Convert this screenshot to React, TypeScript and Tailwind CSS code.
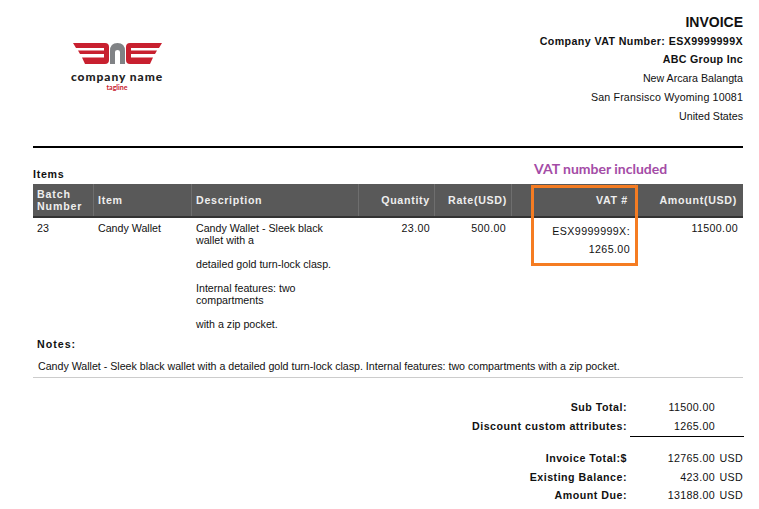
import React from 'react';

const font = "font-['Liberation_Sans',Arial,sans-serif]";

function Logo() {
  return (
    <div className="flex flex-col items-center w-[100px] pt-[43px] pl-[2px]">
      <svg width="89" height="21" viewBox="0 0 89 21">
        <path d="M0 0H32Q36 0 36 4V17Q36 21 32 21H12L9 14.500H31V11H7L5 7.500H31V5H3Z" fill="#c8202f" />
        <path d="M89 0H57Q53 0 53 4V17Q53 21 57 21H77L80 14.500H58V11H82L84 7.500H58V5H86Z" fill="#c8202f" />
        <path d="M37 21V8Q37 0 44.500 0Q52 0 52 8V21H47V9Q47 7 44.500 7Q42 7 42 9V21Z" fill="#808285" />
      </svg>
      <div className="mt-[6px] font-['Lato',sans-serif] font-black text-[12px] leading-[13px] tracking-[0.95px] text-[#222] whitespace-nowrap">
        company name
      </div>
      <div className="mt-px font-['Lato',sans-serif] font-bold text-[7px] leading-[7px] text-[#c8202f]">tagline</div>
    </div>
  );
}

function HeaderCell({ w, right, children }: { w: string; right?: boolean; children: React.ReactNode }) {
  return (
    <div className={`${w} flex items-center px-1 border-r border-[#6e6e6e] ${right ? 'justify-end text-right' : ''}`}>
      {children}
    </div>
  );
}

function Total({ label, value, usd, h }: { label: string; value: string; usd?: boolean; h: string }) {
  return (
    <div className={`flex justify-end items-center ${h}`}>
      <div className="font-bold tracking-[0.5px] text-right">{label}</div>
      <div className="w-[88px] text-right tracking-[0.35px]">{value}</div>
      <div className="w-[28px] text-right tracking-[0.35px]">{usd ? 'USD' : ''}</div>
    </div>
  );
}

export default function App() {
  return (
    <div className={`relative w-[759px] h-[509px] overflow-hidden bg-white pl-[33px] pr-[16px] ${font} text-[10.670px] text-[#111]`}>
      <div className="flex justify-between h-[146px] items-start">
        <div className="pl-[33px]">
          <Logo />
        </div>
        <div className="text-right pt-[13px]">
          <div className="font-bold text-[14px] leading-[18px]">INVOICE</div>
          <div className="font-bold tracking-[0.4px] leading-[18px] mt-[1px]">Company VAT Number: ESX9999999X</div>
          <div className="font-bold tracking-[0.3px] leading-[19px]">ABC Group Inc</div>
          <div className="leading-[19px]">New Arcara Balangta</div>
          <div className="leading-[19px] tracking-[0.15px]">San Fransisco Wyoming 10081</div>
          <div className="leading-[19px]">United States</div>
        </div>
      </div>
      <div className="h-[2px] bg-black" />

      <div className="relative mt-[20px] h-[16px] font-bold tracking-[0.7px] leading-[13px]">
        Items
      </div>

      <div className="flex h-[34px] bg-[#595959] border-b-2 border-[#333] font-bold tracking-[0.7px] text-[#eeeeee] leading-[12px]">
        <HeaderCell w="w-[61px]">
          <span className="tracking-[0.85px]">
            Batch
            <br />
            Number
          </span>
        </HeaderCell>
        <HeaderCell w="w-[98px]">Item</HeaderCell>
        <HeaderCell w="w-[167px]">Description</HeaderCell>
        <HeaderCell w="w-[76px]" right>Quantity</HeaderCell>
        <HeaderCell w="w-[77px]" right>Rate(USD)</HeaderCell>
        <HeaderCell w="w-[124px]" right>
          <span className="pr-[3px]">VAT #</span>
        </HeaderCell>
        <div className="w-[107px] flex items-center justify-end px-1 pr-[6px]">Amount(USD)</div>
      </div>

      <div className="flex pt-[4px] h-[119px] leading-[12px]">
        <div className="w-[61px] px-1">23</div>
        <div className="w-[98px] px-1">Candy Wallet</div>
        <div className="w-[167px] px-1">
          <p className="w-[140px]">Candy Wallet - Sleek black wallet with a</p>
          <p className="mt-[12px]">detailed gold turn-lock clasp.</p>
          <p className="mt-[12px] w-[130px]">Internal features: two compartments</p>
          <p className="mt-[12px]">with a zip pocket.</p>
        </div>
        <div className="w-[76px] pl-1 pr-[5px] text-right tracking-[0.35px]">23.00</div>
        <div className="w-[77px] px-[6px] text-right tracking-[0.35px]">500.00</div>
        <div className="w-[124px] pr-[6px] text-right tracking-[0.4px] leading-[18px]">
          ESX9999999X:
          <br />
          1265.00
        </div>
        <div className="w-[107px] pr-[5px] text-right tracking-[0.35px]">11500.00</div>
      </div>

      <div className="pl-1 font-bold tracking-[1px] leading-[13px] mt-[1px]">Notes:</div>
      <div className="pl-[5px] mt-[9px] h-[17px] leading-[13px] tracking-[-0.015px]">
        Candy Wallet - Sleek black wallet with a detailed gold turn-lock clasp. Internal features: two compartments with a zip pocket.
      </div>
      <div className="h-px bg-[#cccccc]" />

      <div className="mt-[19px]">
        <Total h="h-[19px]" label="Sub Total:" value="11500.00" />
        <Total h="h-[19px]" label="Discount custom attributes:" value="1265.00" />
        <div className="ml-auto -mr-px w-[114px] h-px bg-black mt-px" />
        <div className="h-[11px]" />
        <Total h="h-[19px]" label="Invoice Total:$" value="12765.00" usd />
        <Total h="h-[19px]" label="Existing Balance:" value="423.00" usd />
        <Total h="h-[18px]" label="Amount Due:" value="13188.00" usd />
      </div>

      {/* annotation over the VAT column */}
      <div className="absolute left-[534px] top-[160px] font-['Lato',sans-serif] font-bold text-[14px] leading-[18px] text-[#a44ca6] whitespace-nowrap">
        VAT number included
      </div>
      <div className="absolute left-[531px] top-[185px] w-[107px] h-[81px] border-[3px] border-[#f57c22]" />
    </div>
  );
}
